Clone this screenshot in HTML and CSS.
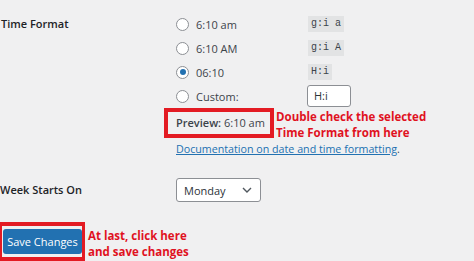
FILE: index.html
```html
<!DOCTYPE html>
<html lang="en">
<head>
  <meta charset="UTF-8" />
  <meta name="viewport" content="width=device-width, initial-scale=1.0" />
  <title>General Settings</title>
  <link rel="stylesheet" href="styles.css">
</head>
<body>
  <main class="settings">
    <div class="row row-time">
      <div class="label">Time Format</div>
      <div class="field">
        <div class="options">
          <label class="option">
            <span class="radio"></span><span class="opt-text">6:10 am</span>
            <code>g:i a</code>
          </label>
          <label class="option">
            <span class="radio"></span><span class="opt-text">6:10 AM</span>
            <code>g:i A</code>
          </label>
          <label class="option">
            <span class="radio checked"></span><span class="opt-text">06:10</span>
            <code>H:i</code>
          </label>
          <label class="option">
            <span class="radio"></span><span class="opt-text">Custom:</span>
            <span class="custom-input">H:i</span>
          </label>
        </div>
        <div class="preview-line">
          <div class="mark preview"><strong>Preview:</strong> 6:10 am</div>
          <p class="note">Double check the selected<br>Time Format from here</p>
        </div>
        <p class="doc"><a href="#">Documentation on date and time formatting</a>.</p>
      </div>
    </div>

    <div class="row row-week">
      <div class="label">Week Starts On</div>
      <div class="field">
        <div class="select">
          <span>Monday</span>
          <svg width="10" height="6" viewBox="0 0 10 6"><path d="M1 1l4 4 4-4" fill="none" stroke="#50575e" stroke-width="1.4"/></svg>
        </div>
      </div>
    </div>

    <div class="submit">
      <div class="mark save">
        <button>Save Changes</button>
      </div>
      <p class="note">At last, click here<br>and save changes</p>
    </div>
  </main>
</body>
</html>
```

FILE: styles.css
```css
body {
  margin: 0;
  background-color: #f0f0f1;
  color: #3c434a;
  font-family: "Open Sans", sans-serif;
  font-size: 11px;
}
.settings {
  width: 474px;
  height: 261px;
  overflow: hidden;
}
.row {
  display: grid;
  grid-template-columns: 176px 1fr;
}
.label {
  padding-left: 1px;
  font-weight: 600;
  color: #1d2327;
  line-height: 24px;
}
.row-time {
  padding-top: 12px;
}
.options {
  display: flex;
  flex-direction: column;
}
.option {
  display: flex;
  align-items: center;
  height: 24px;
}
.radio {
  width: 11px;
  height: 11px;
  border: 1px solid #8c8f94;
  border-radius: 50%;
  background-color: #fff;
  display: flex;
  align-items: center;
  justify-content: center;
}
.radio.checked::after {
  content: "";
  width: 6px;
  height: 6px;
  border-radius: 50%;
  background-color: #2271b1;
}
.opt-text {
  width: 112px;
  padding-left: 7px;
}
code {
  font-family: "Liberation Mono", monospace;
  font-size: 10px;
  line-height: 16px;
  padding: 0 3px;
  background-color: #e2e3e4;
  color: #3c434a;
}
.custom-input {
  width: 36px;
  height: 20px;
  line-height: 20px;
  padding-left: 6px;
  margin-left: -1px;
  border: 1px solid #8c8f94;
  border-radius: 3px;
  background-color: #fff;
  color: #2c3338;
}
.preview-line {
  display: flex;
  align-items: flex-start;
  height: 33px;
}
.mark {
  border: 4px solid #e31b23;
}
.preview {
  margin-left: -12px;
  width: 94px;
  height: 22px;
  line-height: 22px;
  padding-left: 8px;
  white-space: nowrap;
}
.preview strong {
  font-weight: 600;
}
.note {
  margin: 1px 0 0 2px;
  color: #e0121f;
  font-weight: 700;
  font-size: 11.5px;
  line-height: 16px;
}
.doc {
  margin: 0;
  font-size: 10.7px;
  line-height: 16px;
}
.doc a {
  color: #2271b1;
}
.row-week {
  padding-top: 21px;
}
.row-week .label {
  padding-left: 0;
}
.select {
  width: 68px;
  height: 22px;
  padding: 0 8px 0 7px;
  border: 1px solid #8c8f94;
  border-radius: 3px;
  background-color: #fff;
  display: flex;
  align-items: center;
  justify-content: space-between;
  color: #2c3338;
}
.submit {
  display: flex;
  align-items: flex-start;
  margin-top: 20px;
}
.save {
  padding: 3px 0 3px 1px;
  border-width: 4px 3px 4px 2px;
}
button {
  display: block;
  width: 79px;
  height: 25px;
  border: none;
  border-radius: 3px;
  background-color: #2271b1;
  color: #fff;
  font-family: "Open Sans", sans-serif;
  font-size: 11px;
  padding: 0;
}
.submit .note {
  margin: 6px 0 0 3px;
}
```
